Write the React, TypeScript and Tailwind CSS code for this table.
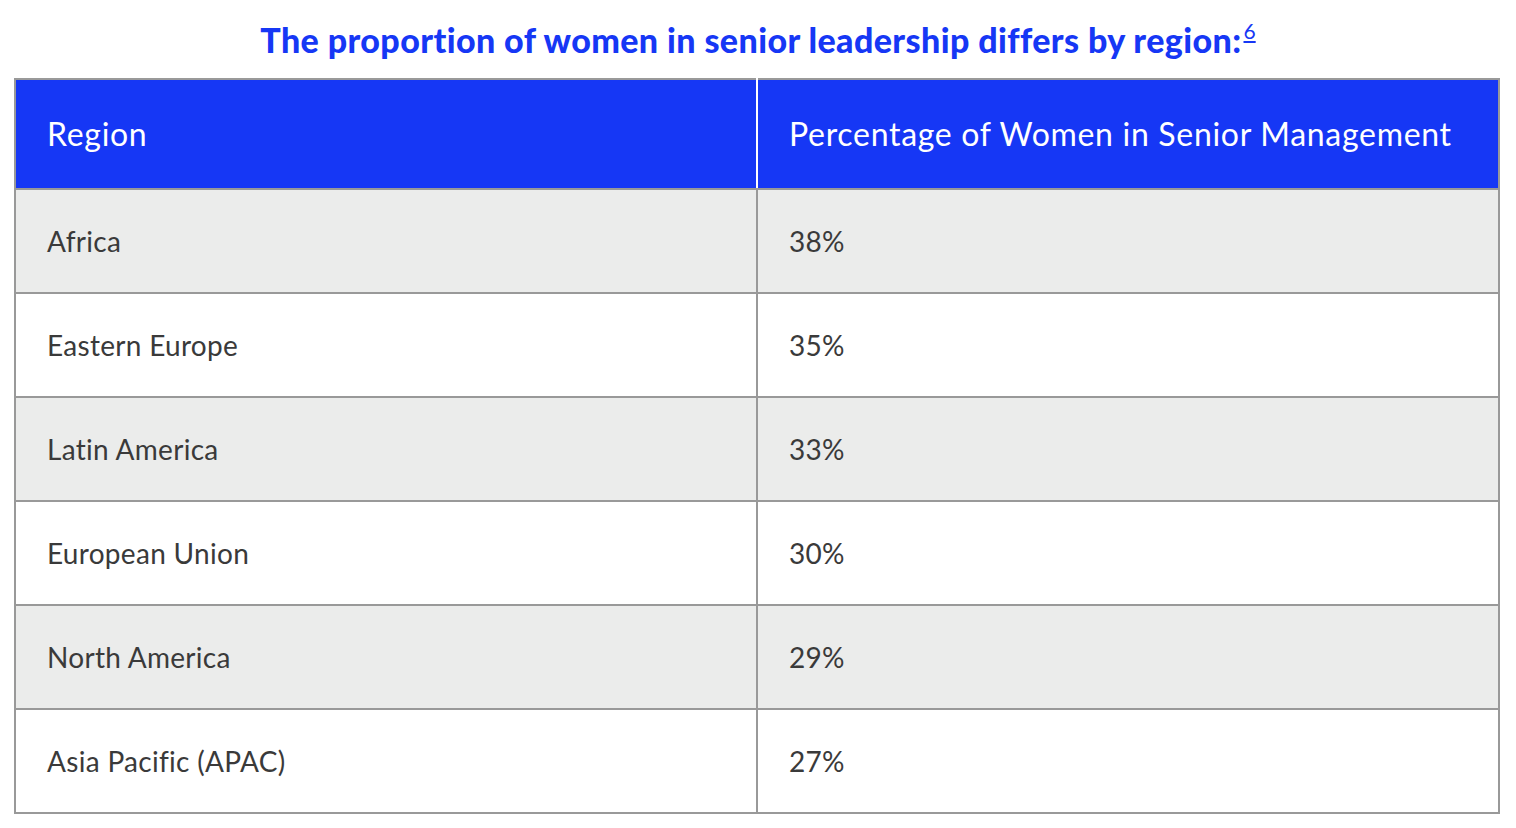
import React from "react";

const rows = [
  { region: "Africa", pct: "38%" },
  { region: "Eastern Europe", pct: "35%" },
  { region: "Latin America", pct: "33%" },
  { region: "European Union", pct: "30%" },
  { region: "North America", pct: "29%" },
  { region: "Asia Pacific (APAC)", pct: "27%" },
];

export default function App() {
  return (
    <div className="min-h-screen bg-white px-[14px] pt-[18px] font-['Lato','Noto_Sans',sans-serif]">
      <h2 className="text-center text-[34px] font-black leading-[44px] tracking-[0.4px] text-[#1637f5]">
        The proportion of women in senior leadership differs by region:
        <sup className="ml-[2px] align-[4px] text-[21px] font-normal tracking-normal underline">6</sup>
      </h2>
      <table className="mt-[16px] w-[1486px] border-collapse border-2 border-[#999]">
        <thead>
          <tr className="h-[110px] bg-[#1637f5] text-white">
            <th className="w-1/2 border-b-2 border-r-2 border-b-[#999] border-r-white px-[31px] text-left text-[32px] font-normal tracking-[0.7px]">
              Region
            </th>
            <th className="w-1/2 border-b-2 border-b-[#999] px-[31px] text-left text-[32px] font-normal tracking-[0.7px]">
              Percentage of Women in Senior Management
            </th>
          </tr>
        </thead>
        <tbody>
          {rows.map((r, i) => (
            <tr
              key={r.region}
              className={i % 2 === 0 ? "h-[104px] bg-[#ebeceb]" : "h-[104px] bg-white"}
            >
              <td className="border-2 border-[#999] px-[31px] text-[28px] tracking-[0.3px] text-[#3a3a3a]">{r.region}</td>
              <td className="border-2 border-[#999] px-[31px] text-[28px] tracking-[0.3px] text-[#3a3a3a]">{r.pct}</td>
            </tr>
          ))}
        </tbody>
      </table>
    </div>
  );
}
